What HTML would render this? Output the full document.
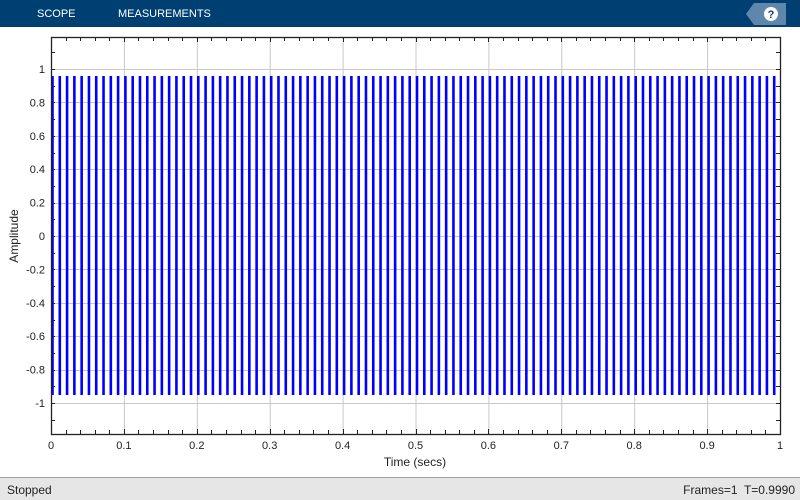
<!DOCTYPE html>
<html><head><meta charset="utf-8"><style>
html,body{margin:0;padding:0;width:800px;height:500px;overflow:hidden;background:#fff;font-family:"Liberation Sans",sans-serif;}
#top{position:absolute;left:0;top:0;width:800px;height:27px;background:#003f72;}
#top span{position:absolute;top:8px;color:#fff;font-size:11px;}
#status{position:absolute;left:0;top:477px;width:800px;height:23px;background:#e6e6e6;border-top:1px solid #a0a0a0;box-sizing:border-box;font-size:12px;color:#222;}
</style></head><body>
<div id="top">
<span style="left:37px">SCOPE</span>
<span style="left:118px">MEASUREMENTS</span>
<svg style="position:absolute;left:746px;top:3px" width="40" height="22"><polygon points="8,0 40,0 40,22 8,22 0,11" fill="#5e87ab"/><circle cx="25" cy="11" r="7" fill="#fff"/><text x="25" y="15" text-anchor="middle" font-size="11" font-weight="bold" fill="#003f72" font-family="Liberation Sans">?</text></svg>
</div>
<svg id="plot" style="position:absolute;left:0;top:0" width="800" height="477"></svg>
<div id="status"><span style="position:absolute;left:7px;top:5px">Stopped</span><span style="position:absolute;right:5px;top:5px">Frames=1&nbsp; T=0.9990</span></div>
<script>
var L=51,R=780,T=37,B=434;
var s='';
function X(v){return L+(R-L)*v;}
function Y(v){return 236-v*167;}
for(var i=1;i<10;i++){s+='<line x1="'+(X(i/10)+.5)+'" y1="'+T+'" x2="'+(X(i/10)+.5)+'" y2="'+B+'" stroke="#c8c8c8"/>';}
for(var j=-5;j<=5;j++){var y=Math.round(Y(j*0.2))+.5;s+='<line x1="'+L+'" y1="'+y+'" x2="'+R+'" y2="'+y+'" stroke="#c8c8c8"/>';}
for(var k=0;k<100;k++){var x=52.5+k*7.29;s+='<line x1="'+x+'" y1="76" x2="'+x+'" y2="395" stroke="#0000ff" stroke-width="2.6"/>';}
// ticks
for(var i=0;i<=50;i++){var x=Math.round(X(i/50))+.5;var len=(i%5==0)?5:4;s+='<line x1="'+x+'" y1="'+B+'" x2="'+x+'" y2="'+(B-len)+'" stroke="#222"/><line x1="'+x+'" y1="'+T+'" x2="'+x+'" y2="'+(T+len)+'" stroke="#222"/>';}
for(var j=-11;j<=11;j++){var y=Math.round(Y(j*0.1))+.5;s+='<line x1="'+L+'" y1="'+y+'" x2="'+(L+4)+'" y2="'+y+'" stroke="#222"/><line x1="'+R+'" y1="'+y+'" x2="'+(R-4)+'" y2="'+y+'" stroke="#222"/>';}
s+='<rect x="'+(L+.5)+'" y="'+(T+.5)+'" width="'+(R-L)+'" height="'+(B-T)+'" fill="none" stroke="#222" stroke-width="1.3"/>';
var lab=['0','0.1','0.2','0.3','0.4','0.5','0.6','0.7','0.8','0.9','1'];
for(var i=0;i<=10;i++){s+='<text x="'+X(i/10)+'" y="449" font-size="11" text-anchor="middle" fill="#222" font-family="Liberation Sans">'+lab[i]+'</text>';}
var yl=['-1','-0.8','-0.6','-0.4','-0.2','0','0.2','0.4','0.6','0.8','1'];
for(var j=0;j<=10;j++){s+='<text x="45" y="'+(Y(-1+j*0.2)+4)+'" font-size="11" text-anchor="end" fill="#222" font-family="Liberation Sans">'+yl[j]+'</text>';}
s+='<text x="415" y="466" font-size="12" text-anchor="middle" fill="#222" font-family="Liberation Sans">Time (secs)</text>';
s+='<text transform="translate(18,236) rotate(-90)" font-size="12" text-anchor="middle" fill="#222" font-family="Liberation Sans">Amplitude</text>';
document.getElementById('plot').innerHTML=s;
</script>
</body></html>
